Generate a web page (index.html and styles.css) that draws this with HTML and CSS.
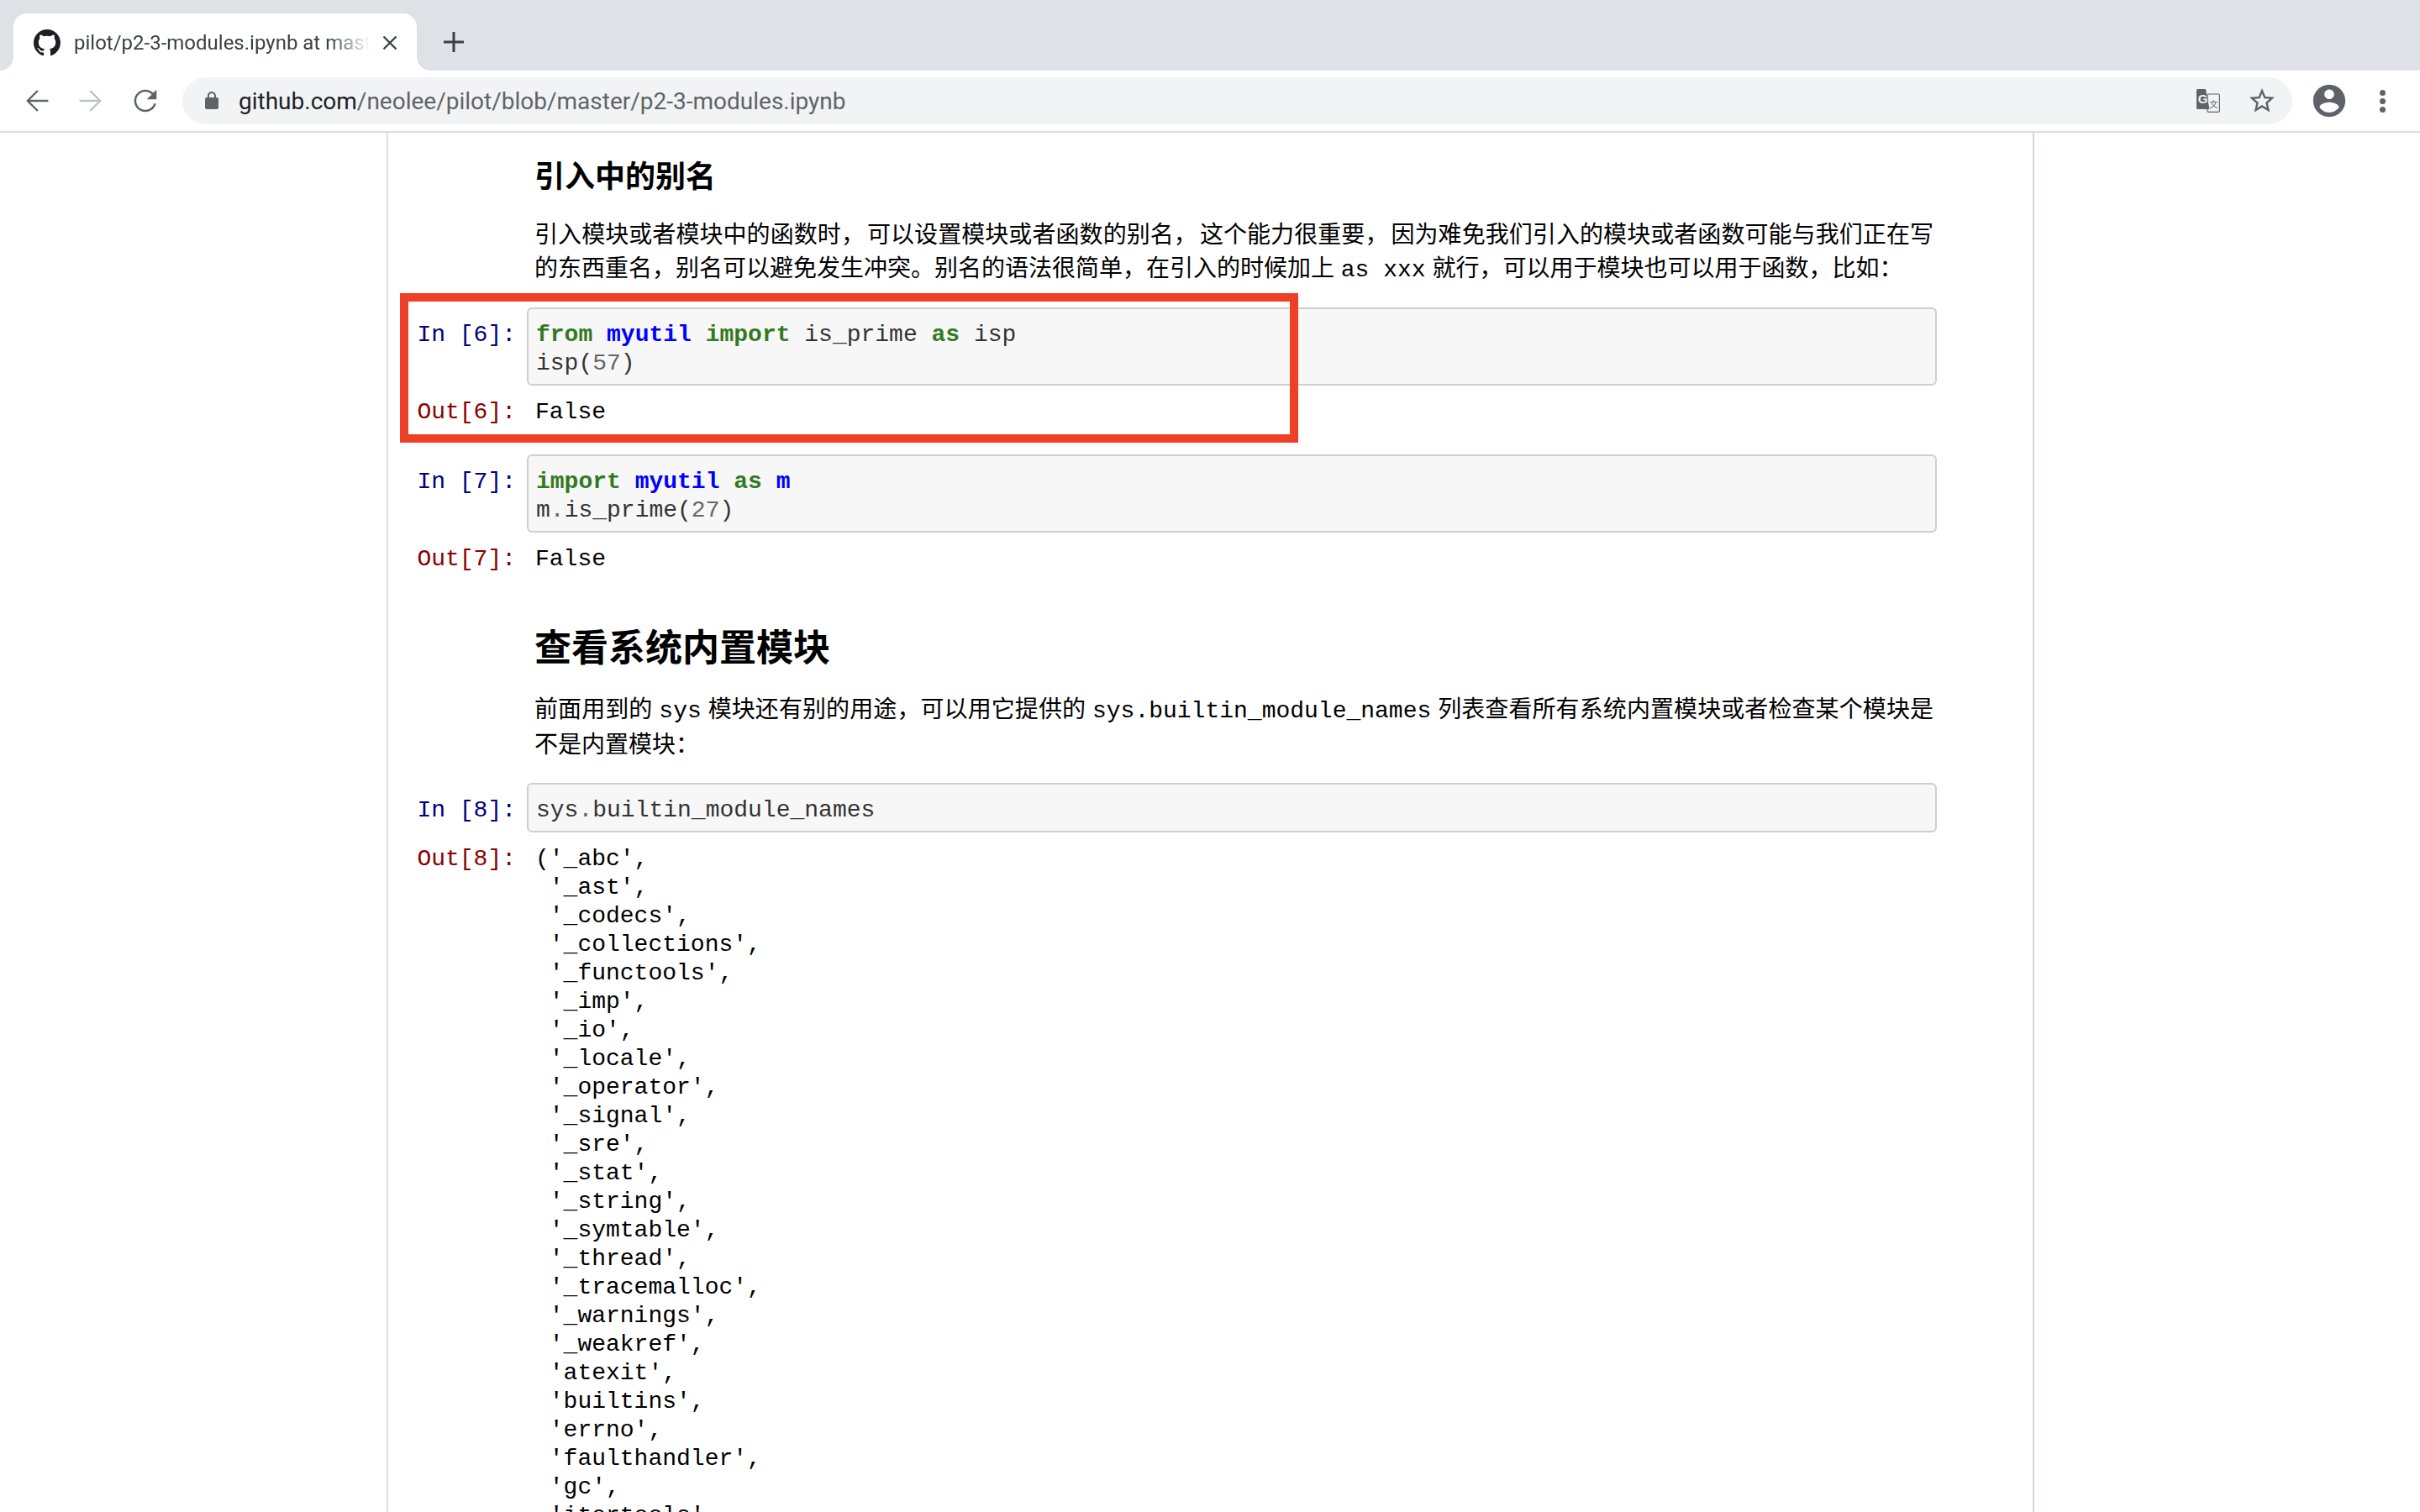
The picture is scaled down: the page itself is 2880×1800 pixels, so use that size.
FILE: index.html
```html
<!DOCTYPE html>
<html lang="zh">
<head>
<meta charset="utf-8">
<title>pilot/p2-3-modules.ipynb at master</title>
<link rel="stylesheet" href="styles.css">
</head>
<body>
<header class="chrome">
  <div class="tabstrip">
    <div class="tab">
      <svg class="favicon" viewBox="0 0 16 16"><path fill="#1b1f23" d="M8 0C3.58 0 0 3.58 0 8c0 3.54 2.29 6.53 5.47 7.59.4.07.55-.17.55-.38 0-.19-.01-.82-.01-1.49-2.01.37-2.53-.49-2.69-.94-.09-.23-.48-.94-.82-1.13-.28-.15-.68-.52-.01-.53.63-.01 1.08.58 1.23.82.72 1.21 1.87.87 2.33.66.07-.52.28-.87.51-1.07-1.78-.2-3.64-.89-3.64-3.95 0-.87.31-1.59.82-2.15-.08-.2-.36-1.02.08-2.12 0 0 .67-.21 2.2.82.64-.18 1.32-.27 2-.27.68 0 1.36.09 2 .27 1.53-1.04 2.2-.82 2.2-.82.44 1.1.16 1.92.08 2.12.51.56.82 1.27.82 2.15 0 3.07-1.87 3.75-3.65 3.95.29.25.54.73.54 1.48 0 1.07-.01 1.93-.01 2.2 0 .21.15.46.55.38A8.013 8.013 0 0016 8c0-4.42-3.58-8-8-8z"/></svg>
      <span class="tab-title">pilot/p2-3-modules.ipynb at master</span>
      <svg class="tab-close" viewBox="0 0 16 16"><path d="M2 2l12 12M14 2L2 14" stroke="#3c4043" stroke-width="1.900" fill="none"/></svg>
    </div>
    <svg class="newtab" viewBox="0 0 24 24"><path d="M12 0v24M0 12h24" stroke="#3c4043" stroke-width="3" fill="none"/></svg>
  </div>
  <div class="toolbar">
    <svg class="navicon" viewBox="0 0 24 24"><path fill="#5f6368" d="M20 11.300H7l6-6L12 4.300l-7.700 7.700 7.700 7.700 1-1-6-6h13v-1.400z"/></svg>
    <svg class="navicon" viewBox="0 0 24 24"><path fill="#bdc1c6" d="M4 11.300h13l-6-6 1-1 7.700 7.700-7.700 7.700-1-1 6-6H4v-1.400z"/></svg>
    <svg class="navicon reload" viewBox="0 0 24 24"><path fill="#5f6368" d="M17.650 6.350C16.200 4.900 14.210 4 12 4c-4.420 0-7.990 3.580-7.990 8s3.570 8 7.990 8c3.730 0 6.840-2.550 7.730-6h-1.600c-.82 2.560-3.270 4.500-6.130 4.500-3.590 0-6.500-2.910-6.500-6.500s2.910-6.500 6.500-6.500c1.800 0 3.400.75 4.570 1.930L13 11h7V4l-2.350 2.350z"/></svg>
    <div class="omnibox">
      <svg class="lock" viewBox="0 0 24 24"><path fill="#5f6368" d="M18 8h-1V6c0-2.760-2.240-5-5-5S7 3.240 7 6v2H6c-1.100 0-2 .9-2 2v10c0 1.100.9 2 2 2h12c1.100 0 2-.9 2-2V10c0-1.100-.9-2-2-2zM9 6c0-1.660 1.340-3 3-3s3 1.340 3 3v2H9V6z"/></svg>
      <span class="url"><span class="host">github.com</span>/neolee/pilot/blob/master/p2-3-modules.ipynb</span>
      <svg class="translate" viewBox="0 0 28 28">
        <rect x="13" y="6" width="14.400" height="21.400" rx="1.500" fill="#f1f3f4" stroke="#5f6368" stroke-width="1.200"/>
        <path fill="#5f6368" d="M1.500 0h9.500l4.500 24H1.500A1.500 1.500 0 0 1 0 22.500V1.500A1.500 1.500 0 0 1 1.500 0z"/>
        <text class="tr-g" x="1.800" y="17">G</text>
        <text class="tr-x" x="15.500" y="22">文</text>
      </svg>
      <svg class="star" viewBox="0 0 24 24"><path fill="#5f6368" d="M22 9.240l-7.190-.62L12 2 9.190 8.630 2 9.240l5.460 4.730L5.820 21 12 17.270 18.180 21l-1.630-7.030L22 9.240zM12 15.400l-3.760 2.270 1-4.280-3.320-2.880 4.380-.38L12 6.100l1.710 4.040 4.380.38-3.320 2.880 1 4.280L12 15.400z"/></svg>
    </div>
    <svg class="account" viewBox="0 0 24 24"><path fill="#5f6368" d="M12 2C6.480 2 2 6.480 2 12s4.480 10 10 10 10-4.480 10-10S17.520 2 12 2zm0 3c1.660 0 3 1.340 3 3s-1.340 3-3 3-3-1.340-3-3 1.340-3 3-3zm0 14.200c-2.500 0-4.710-1.280-6-3.220.03-1.990 4-3.080 6-3.080 1.990 0 5.970 1.090 6 3.080-1.290 1.940-3.500 3.220-6 3.220z"/></svg>
    <div class="menu"><i></i><i></i><i></i></div>
  </div>
</header>
<main class="page">
  <article class="notebook">
    <section class="md first">
      <h3>引入中的别名</h3>
      <p>引入模块或者模块中的函数时<span class="wide">，</span>可以设置模块或者函数的别名<span class="wide">，</span>这个能力很重要<span class="wide">，</span>因为难免我们引入的模块或者函数可能与我们正在写的东西重名，别名可以避免发生冲突。别名的语法很简单，在引入的时候加上 <code>as xxx</code> 就行，可以用于模块也可以用于函数，比如：</p>
    </section>
    <section class="cell">
      <div class="row">
        <div class="prompt in">In [6]:</div>
        <pre class="input"><b class="kw">from</b> <b class="ns">myutil</b> <b class="kw">import</b> is_prime <b class="kw">as</b> isp
isp(<span class="num">57</span>)</pre>
      </div>
      <div class="row out">
        <div class="prompt outp">Out[6]:</div>
        <pre class="output">False</pre>
      </div>
      <div class="callout"></div>
    </section>
    <section class="cell">
      <div class="row">
        <div class="prompt in">In [7]:</div>
        <pre class="input"><b class="kw">import</b> <b class="ns">myutil</b> <b class="kw">as</b> <b class="ns">m</b>
m<span class="num">.</span>is_prime(<span class="num">27</span>)</pre>
      </div>
      <div class="row out">
        <div class="prompt outp">Out[7]:</div>
        <pre class="output">False</pre>
      </div>
    </section>
    <section class="md second">
      <h2>查看系统内置模块</h2>
      <p>前面用到的 <code>sys</code> 模块还有别的用途，可以用它提供的 <code>sys.builtin_module_names</code> 列表查看所有系统内置模块或者检查某个模块是不是内置模块：</p>
    </section>
    <section class="cell last">
      <div class="row">
        <div class="prompt in">In [8]:</div>
        <pre class="input">sys<span class="num">.</span>builtin_module_names</pre>
      </div>
      <div class="row out">
        <div class="prompt outp">Out[8]:</div>
        <pre class="output">('_abc',
 '_ast',
 '_codecs',
 '_collections',
 '_functools',
 '_imp',
 '_io',
 '_locale',
 '_operator',
 '_signal',
 '_sre',
 '_stat',
 '_string',
 '_symtable',
 '_thread',
 '_tracemalloc',
 '_warnings',
 '_weakref',
 'atexit',
 'builtins',
 'errno',
 'faulthandler',
 'gc',
 'itertools',</pre>
      </div>
    </section>
  </article>
</main>
</body>
</html>
```
FILE: styles.css
```css
* { box-sizing: border-box; }
html, body { margin: 0; height: 100%; overflow: hidden; background: #fff; }
body { display: flex; flex-direction: column; font-family: "Liberation Sans", "Noto Sans CJK SC", sans-serif; }

.tabstrip { height: 84px; background: #dee1e6; padding: 16px 0 0 16px; display: flex; align-items: flex-start; }
.tab { position: relative; width: 480px; height: 68px; background: #fff; border-radius: 16px 16px 0 0; display: flex; align-items: center; padding: 2px 0 0 24px; }
.tab::before, .tab::after { content: ""; position: absolute; bottom: 0; width: 16px; height: 16px; }
.tab::before { left: -16px; background: radial-gradient(circle at 0 0, #dee1e6 15.500px, #fff 16px); }
.tab::after { right: -16px; background: radial-gradient(circle at 100% 0, #dee1e6 15.500px, #fff 16px); }
.favicon { width: 32px; height: 32px; flex: none; }
.tab-title { margin-left: 16px; width: 352px; flex: none; overflow: hidden; white-space: nowrap; font: 24px/32px Roboto, sans-serif; color: #3c4043; -webkit-mask-image: linear-gradient(90deg, #000 86%, transparent 100%); mask-image: linear-gradient(90deg, #000 86%, transparent 100%); }
.tab-close { width: 20px; height: 20px; margin-left: 14px; flex: none; }
.newtab { width: 24px; height: 24px; margin: 22px 0 0 32px; flex: none; }

.toolbar { height: 74px; border-bottom: 2px solid #dadce0; padding: 0 0 0 24px; display: flex; align-items: center; gap: 24px; background: #fff; }
.navicon { width: 40px; height: 40px; flex: none; }
.reload { margin-left: 1px; }
.omnibox { flex: none; width: 2511px; height: 56px; background: #f1f3f4; border-radius: 28px; display: flex; align-items: center; padding: 0 18px 0 23px; }
.lock { width: 24px; height: 24px; flex: none; }
.url { margin: 2px 0 0 20px; font: 28px/40px Roboto, sans-serif; color: #5f6368; white-space: nowrap; flex: 1; }
.host { color: #202124; }
.translate { width: 28px; height: 28px; flex: none; }
.tr-g { font: bold 15px "Liberation Sans", sans-serif; fill: #f1f3f4; }
.tr-x { font: 10px "Noto Sans CJK SC", sans-serif; fill: #5f6368; }
.star { width: 36px; height: 36px; flex: none; margin-left: 32px; }
.account { width: 46px; height: 46px; flex: none; margin-left: -3px; }
.menu { display: flex; flex-direction: column; gap: 3px; margin-left: 13px; }
.menu i { display: block; width: 7px; height: 7px; border-radius: 50%; background: #5f6368; }

.page { flex: 1; min-height: 0; overflow: hidden; padding-left: 460px; }
.notebook { width: 1961px; height: 100%; border-left: 2px solid #e0e0e0; border-right: 2px solid #d4d6de; padding-right: 114px; font-family: "Liberation Sans", "Noto Sans CJK SC", sans-serif; color: #000; }

.md { padding-left: 174px; }
.md h3, .md h2 { margin: 0; font-weight: bold; font-family: "Liberation Sans", "Noto Sans CJK SC", sans-serif; }
.md h3 { font-size: 36px; line-height: 40px; }
.md h2 { font-size: 44px; line-height: 48px; }
.md p { margin: 0; padding-right: 4px; font-size: 28px; line-height: 40px; text-align: justify; }
.md .wide { margin-right: 3px; }
.md code { font-family: "Liberation Mono", monospace; font-size: 28px; }
.md.first { padding-top: 33px; }
.md.first h3 { margin-bottom: 29px; }
.md.second { padding-top: 65px; }
.md.second h2 { margin-bottom: 29px; }

.cell { position: relative; margin-top: 33px; }
.md + .cell { margin-top: 24px; }
.md + .cell.last { margin-top: 25px; }
.row { display: flex; align-items: flex-start; }
.row.out { margin-top: 15px; }
.prompt { width: 165px; flex: none; padding: 16px 13px 0 0; text-align: right; font: 28px/34px "Liberation Mono", monospace; }
.prompt.in { color: #000080; }
.prompt.outp { color: #8b0000; padding-top: 0; }
pre { margin: 0; font: 28px/34px "Liberation Mono", monospace; }
.input { flex: 1; min-width: 0; border: 2px solid #cfcfcf; border-radius: 6px; background: #f7f7f7; padding: 14px 9px 7px; color: #333; }
.output { padding-left: 10px; color: #000; }
.kw { color: #337a1e; }
.ns { color: #0000ff; }
.num { color: #666; }
.callout { position: absolute; left: 14px; top: -17px; width: 1069px; height: 178px; border: 10px solid #ee4026; }
```
